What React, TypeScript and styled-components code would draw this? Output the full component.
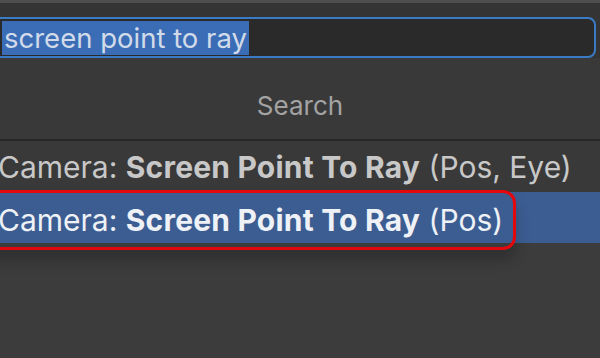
import React from "react";
import styled, { createGlobalStyle } from "styled-components";

const Global = createGlobalStyle`
  html, body { margin: 0; padding: 0; background: #3c3c3c; }
  body { width: 600px; height: 358px; overflow: hidden; font-family: Inter, "Noto Sans", sans-serif; }
  #root { width: 600px; height: 358px; }
`;

const Window = styled.div`
  display: flex;
  flex-direction: column;
  width: 600px;
  height: 358px;
  background: #3c3c3c;
`;

const TopEdge = styled.div`
  height: 3px;
  background: #4e4e4e;
`;

const Header = styled.div`
  background: #343434;
  padding: 14px 4px 0 0;
`;

const Field = styled.div`
  display: flex;
  align-items: center;
  height: 37px;
  margin-left: -12px;
  padding-left: 12px;
  border: 2.5px solid #3b7ac4;
  border-radius: 8px;
  background: #2a2a2a;
`;

const Selected = styled.span`
  display: flex;
  align-items: center;
  height: 34px;
  padding: 0 2px;
  background: #3b6db6;
  color: #d2dbe9;
  font-size: 27.5px;
  white-space: nowrap;
`;

const Body = styled.div`
  background: #393939;
  display: flex;
  flex-direction: column;
`;

const Label = styled.div`
  height: 83px;
  display: flex;
  justify-content: center;
  align-items: flex-start;
  padding-top: 32px;
  color: #a3a3a3;
  font-size: 26px;
  line-height: 31px;
  border-bottom: 2px solid #262626;
  box-sizing: border-box;
`;

const Row = styled.div<{ $active?: boolean }>`
  position: relative;
  height: 51px;
  box-sizing: border-box;
  padding-top: ${(p) => (p.$active ? 5 : 0)}px;
  display: flex;
  align-items: center;
  margin-left: -2px;
  background: ${(p) => (p.$active ? "#3c5d92" : "#393939")};
  color: ${(p) => (p.$active ? "#eef1f6" : "#c8c8c8")};
  font-size: 30px;
  white-space: nowrap;
`;

const Strong = styled.b`
  font-weight: 700;
  letter-spacing: 0.2px;
`;

const Highlight = styled.div`
  position: absolute;
  left: -20px;
  top: -2px;
  width: 538px;
  bottom: -7px;
  border: 3.5px solid #e4080d;
  border-radius: 13px;
  box-sizing: border-box;
  box-shadow: 0 10px 14px rgba(0, 0, 0, 0.22);
  pointer-events: none;
`;

const Rest = styled.div`
  flex: 1;
  background: #3c3c3c;
`;

export default function App() {
  return (
    <Window>
      <Global />
      <TopEdge />
      <Header>
        <Field>
          <Selected>screen point to ray</Selected>
        </Field>
      </Header>
      <Body>
        <Label>Search</Label>
        <Row>
          Camera:&nbsp;<Strong>Screen Point To Ray</Strong>&nbsp;(Pos, Eye)
        </Row>
        <Row $active>
          Camera:&nbsp;<Strong>Screen Point To Ray</Strong>&nbsp;(Pos)
          <Highlight />
        </Row>
      </Body>
      <Rest />
    </Window>
  );
}
